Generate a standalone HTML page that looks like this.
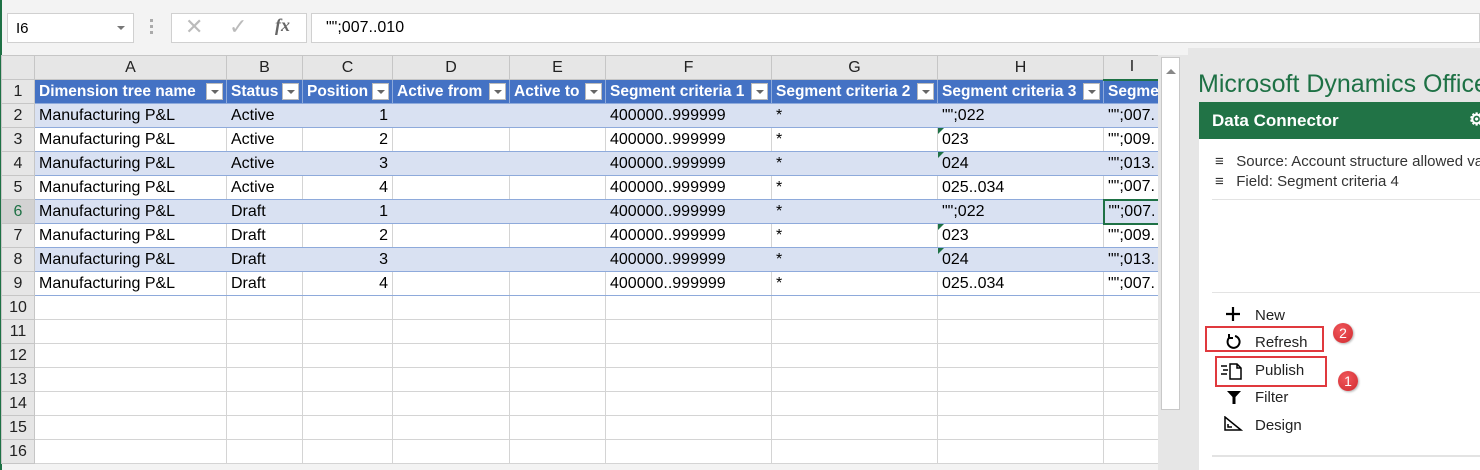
<!DOCTYPE html>
<html><head><meta charset="utf-8"><style>
*{margin:0;padding:0;box-sizing:border-box}
html,body{width:1480px;height:470px;overflow:hidden}
body{background:#f3f3f3;font-family:"Liberation Sans",sans-serif;position:relative}
.abs{position:absolute}
table{border-collapse:collapse;table-layout:fixed;position:absolute;left:1px;top:55px;font-size:16px;color:#000}
td{height:24px;border:1px solid #d4d4d4;padding:0 4px;white-space:nowrap;overflow:hidden;background:#fff}
tr.ch td{background:#e6e6e6;text-align:center;color:#222;font-size:16px;border-color:#c6c6c6;height:24px}
td.rh{background:#e6e6e6;text-align:center;color:#222;font-size:16px;border-color:#c6c6c6;padding:0}
tr.hd td.c{background:#4472c4;color:#fff;font-weight:bold;font-size:15.5px;border-color:#8eaadb;position:relative;padding-right:22px}
tr.hd td.c i{position:absolute;right:3px;top:3px;width:17px;height:17px;background:#fff;border:1px solid #bbb}
tr.hd td.c i:after{content:"";position:absolute;left:4px;top:6px;border:4px solid transparent;border-top:4px solid #666}
tr.b td.c{background:#d9e1f2;border-color:#d9e1f2;border-bottom:1px solid #8eaadb}
tr.w td.c{border-bottom:1px solid #8eaadb;border-top:1px solid #8eaadb}
td.r{text-align:right}
.g{position:relative}
.g:before{content:"";position:absolute;left:0;top:0;border-top:6px solid #1e7145;border-right:6px solid transparent}
.pane{left:1188px;top:48px;width:292px;height:422px;background:#e6e6e6}
.item{position:absolute;left:1227px;font-size:15px;color:#222}
.ic{position:absolute;left:1224px}
.badge{position:absolute;width:20px;height:20px;border-radius:50%;background:radial-gradient(circle at 40% 35%,#f0575b,#d02a2f);color:#fff;font-size:14px;text-align:center;line-height:20px;box-shadow:1px 1px 2px rgba(0,0,0,.3)}
.box{position:absolute;border:2px solid #e0393e}
</style></head><body>
<div class="abs" style="left:0;top:0;width:2px;height:470px;background:#1e7145"></div>
<div class="abs" style="left:7px;top:13px;width:127px;height:30px;background:#fff;border:1px solid #d0d0d0;font-size:15px;padding:6px 8px">I6<span style="position:absolute;right:8px;top:12px;border:4px solid transparent;border-top:4px solid #777"></span></div>
<div class="abs" style="left:150px;top:19px;width:3px;height:3px;background:#aaa;box-shadow:0 6px #aaa,0 12px #aaa"></div>
<div class="abs" style="left:171px;top:13px;width:136px;height:30px;background:#fff;border:1px solid #d0d0d0"></div>
<div class="abs" style="left:185px;top:14px;font-size:22px;color:#bbb">✕</div>
<div class="abs" style="left:229px;top:14px;font-size:22px;color:#bbb">✓</div>
<div class="abs" style="left:275px;top:15px;font-size:18px;color:#666;font-style:italic;font-weight:bold;font-family:'Liberation Serif',serif">fx</div>
<div class="abs" style="left:311px;top:13px;width:1169px;height:30px;background:#fff;border:1px solid #d0d0d0;font-size:16px;padding:5px 14px">"";007..010</div>
<table>
<colgroup><col style="width:33px"><col style="width:192px"><col style="width:76px"><col style="width:90px"><col style="width:117px"><col style="width:96px"><col style="width:166px"><col style="width:166px"><col style="width:166px"><col style="width:55px"></colgroup>
<tr class="ch"><td style="background:#e6e6e6"></td><td>A</td><td>B</td><td>C</td><td>D</td><td>E</td><td>F</td><td>G</td><td>H</td><td style="border-bottom:2px solid #1e7145">I</td></tr>
<tr class="hd"><td class="rh">1</td><td class="c">Dimension tree name<i></i></td><td class="c">Status<i></i></td><td class="c">Position<i></i></td><td class="c">Active from<i></i></td><td class="c">Active to<i></i></td><td class="c">Segment criteria 1<i></i></td><td class="c">Segment criteria 2<i></i></td><td class="c">Segment criteria 3<i></i></td><td class="c" style="padding-right:0">Segme</td></tr>
<tr class="b"><td class="rh">2</td><td class="c">Manufacturing P&amp;L</td><td class="c">Active</td><td class="c r">1</td><td class="c"></td><td class="c"></td><td class="c">400000..999999</td><td class="c">*</td><td class="c">"";022</td><td class="c">"";007.</td></tr>
<tr class="w"><td class="rh">3</td><td class="c">Manufacturing P&amp;L</td><td class="c">Active</td><td class="c r">2</td><td class="c"></td><td class="c"></td><td class="c">400000..999999</td><td class="c">*</td><td class="c g">023</td><td class="c">"";009.</td></tr>
<tr class="b"><td class="rh">4</td><td class="c">Manufacturing P&amp;L</td><td class="c">Active</td><td class="c r">3</td><td class="c"></td><td class="c"></td><td class="c">400000..999999</td><td class="c">*</td><td class="c g">024</td><td class="c">"";013.</td></tr>
<tr class="w"><td class="rh">5</td><td class="c">Manufacturing P&amp;L</td><td class="c">Active</td><td class="c r">4</td><td class="c"></td><td class="c"></td><td class="c">400000..999999</td><td class="c">*</td><td class="c">025..034</td><td class="c">"";007.</td></tr>
<tr class="b"><td class="rh" style="background:#d2d2d2;color:#1e7145">6</td><td class="c">Manufacturing P&amp;L</td><td class="c">Draft</td><td class="c r">1</td><td class="c"></td><td class="c"></td><td class="c">400000..999999</td><td class="c">*</td><td class="c">"";022</td><td class="c" style="border:2px solid #1e7145">"";007.</td></tr>
<tr class="w"><td class="rh">7</td><td class="c">Manufacturing P&amp;L</td><td class="c">Draft</td><td class="c r">2</td><td class="c"></td><td class="c"></td><td class="c">400000..999999</td><td class="c">*</td><td class="c g">023</td><td class="c">"";009.</td></tr>
<tr class="b"><td class="rh">8</td><td class="c">Manufacturing P&amp;L</td><td class="c">Draft</td><td class="c r">3</td><td class="c"></td><td class="c"></td><td class="c">400000..999999</td><td class="c">*</td><td class="c g">024</td><td class="c">"";013.</td></tr>
<tr class="w"><td class="rh">9</td><td class="c">Manufacturing P&amp;L</td><td class="c">Draft</td><td class="c r">4</td><td class="c"></td><td class="c"></td><td class="c">400000..999999</td><td class="c">*</td><td class="c">025..034</td><td class="c">"";007.</td></tr>
<tr><td class="rh">10</td><td></td><td></td><td></td><td></td><td></td><td></td><td></td><td></td><td></td></tr>
<tr><td class="rh">11</td><td></td><td></td><td></td><td></td><td></td><td></td><td></td><td></td><td></td></tr>
<tr><td class="rh">12</td><td></td><td></td><td></td><td></td><td></td><td></td><td></td><td></td><td></td></tr>
<tr><td class="rh">13</td><td></td><td></td><td></td><td></td><td></td><td></td><td></td><td></td><td></td></tr>
<tr><td class="rh">14</td><td></td><td></td><td></td><td></td><td></td><td></td><td></td><td></td><td></td></tr>
<tr><td class="rh">15</td><td></td><td></td><td></td><td></td><td></td><td></td><td></td><td></td><td></td></tr>
<tr><td class="rh">16</td><td></td><td></td><td></td><td></td><td></td><td></td><td></td><td></td><td></td></tr>
</table>
<div class="abs" style="left:1158px;top:55px;width:30px;height:415px;background:#e6e6e6"></div>
<div class="abs" style="left:1161px;top:57px;width:19px;height:353px;background:#fff;border:1px solid #c8c8c8"></div>
<div class="abs" style="left:1166px;top:64px;border:5px solid transparent;border-bottom:5px solid #888"></div>
<div class="abs pane"></div>
<div class="abs" style="left:1198px;top:70px;font-size:25px;color:#1e7145;white-space:nowrap">Microsoft Dynamics Office</div>
<div class="abs" style="left:1199px;top:102px;width:281px;height:368px;background:#fff"></div>
<div class="abs" style="left:1199px;top:102px;width:281px;height:37px;background:#217346;color:#fff;font-weight:bold;font-size:17px;padding:9px 13px;white-space:nowrap">Data Connector<span style="position:absolute;left:270px;top:8px">⚙</span></div>
<div class="abs" style="left:1215px;top:152px;font-size:15px;color:#333;line-height:20px;white-space:nowrap">≡&nbsp;&nbsp; Source: Account structure allowed values<br>≡&nbsp;&nbsp; Field: Segment criteria 4</div>
<div class="abs" style="left:1212px;top:199px;width:268px;height:1px;background:#e3e3e3"></div>
<div class="abs" style="left:1212px;top:292px;width:268px;height:1px;background:#e3e3e3"></div>
<div class="abs" style="left:1212px;top:455px;width:268px;height:2px;background:#e3e3e3"></div>
<svg class="abs" style="left:1226px;top:307px" width="14" height="14" viewBox="0 0 14 14" stroke="#000" stroke-width="2.2"><path d="M7 0v14M0 7h14"/></svg><div class="item" style="left:1255px;top:307px">New</div>
<svg class="abs" style="left:1226px;top:333px" width="16" height="17" viewBox="0 0 16 17" fill="none" stroke="#000" stroke-width="2"><path d="M4 4A6 6 0 1 0 9 3"/><path d="M3 1v4h4"/></svg><div class="item" style="left:1255px;top:334px">Refresh</div>
<svg class="abs" style="left:1220px;top:362px" width="24" height="18" viewBox="0 0 24 18" fill="none" stroke="#000" stroke-width="1.5"><path d="M1 4h6M3 8h5M1 12h6"/><path d="M10 2h7l4 4v11H10z M17 2v4h4"/></svg><div class="item" style="left:1255px;top:362px">Publish</div>
<svg class="abs" style="left:1227px;top:390px" width="14" height="15" viewBox="0 0 14 15"><path d="M0 1h14L8.5 7v7h-3V7z" fill="#000"/></svg><div class="item" style="left:1255px;top:389px">Filter</div>
<svg class="abs" style="left:1223px;top:416px" width="20" height="16" viewBox="0 0 20 16" fill="none" stroke="#000" stroke-width="1.5"><path d="M2 1v13h16L2 1z M5 8v3h4"/></svg><div class="item" style="left:1255px;top:417px">Design</div>
<div class="box" style="left:1205px;top:326px;width:119px;height:26px"></div>
<div class="box" style="left:1215px;top:356px;width:112px;height:31px"></div>
<div class="badge" style="left:1333px;top:323px">2</div>
<div class="badge" style="left:1338px;top:371px">1</div>
</body></html>
